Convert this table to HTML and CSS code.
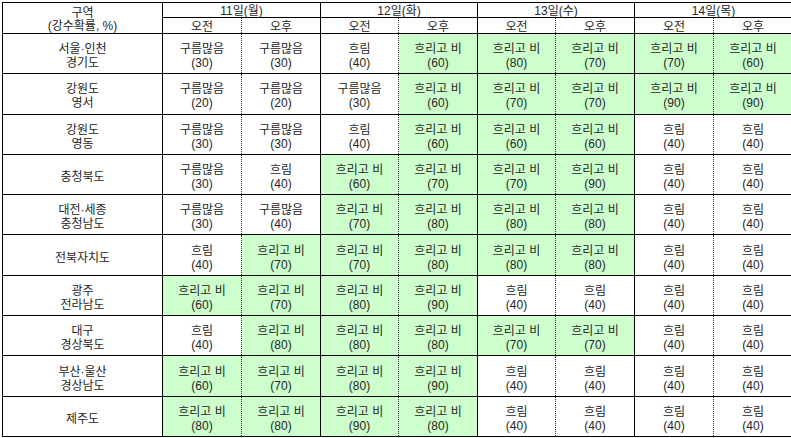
FILE: index.html
```html
<!DOCTYPE html>
<html lang="ko">
<head>
<meta charset="utf-8">
<link rel="stylesheet" href="styles.css">
</head>
<body>
<table class="fc">
  <colgroup>
    <col class="c-region">
    <col class="c79"><col class="c79"><col class="c78"><col class="c79"><col class="c78"><col class="c79"><col class="c79"><col class="c79">
  </colgroup>
  <thead>
    <tr class="h1">
      <th rowspan="2" class="region-head">구역<br>(강수확률, %)</th>
      <th colspan="2" class="day">11일(월)</th>
      <th colspan="2" class="day">12일(화)</th>
      <th colspan="2" class="day">13일(수)</th>
      <th colspan="2" class="day">14일(목)</th>
    </tr>
    <tr class="h2">
      <th class="am">오전</th><th class="pm">오후</th>
      <th class="am">오전</th><th class="pm">오후</th>
      <th class="am">오전</th><th class="pm">오후</th>
      <th class="am">오전</th><th class="pm">오후</th>
    </tr>
  </thead>
  <tbody>
    <tr>
      <th class="region">서울·인천<br>경기도</th>
      <td class="am">구름많음<br>(30)</td><td class="pm">구름많음<br>(30)</td>
      <td class="am">흐림<br>(40)</td><td class="pm rain">흐리고 비<br>(60)</td>
      <td class="am rain">흐리고 비<br>(80)</td><td class="pm rain">흐리고 비<br>(70)</td>
      <td class="am rain">흐리고 비<br>(70)</td><td class="pm rain">흐리고 비<br>(60)</td>
    </tr>
    <tr>
      <th class="region">강원도<br>영서</th>
      <td class="am">구름많음<br>(20)</td><td class="pm">구름많음<br>(20)</td>
      <td class="am">구름많음<br>(30)</td><td class="pm rain">흐리고 비<br>(60)</td>
      <td class="am rain">흐리고 비<br>(70)</td><td class="pm rain">흐리고 비<br>(70)</td>
      <td class="am rain">흐리고 비<br>(90)</td><td class="pm rain">흐리고 비<br>(90)</td>
    </tr>
    <tr>
      <th class="region">강원도<br>영동</th>
      <td class="am">구름많음<br>(30)</td><td class="pm">구름많음<br>(30)</td>
      <td class="am">흐림<br>(40)</td><td class="pm rain">흐리고 비<br>(60)</td>
      <td class="am rain">흐리고 비<br>(60)</td><td class="pm rain">흐리고 비<br>(60)</td>
      <td class="am">흐림<br>(40)</td><td class="pm">흐림<br>(40)</td>
    </tr>
    <tr>
      <th class="region">충청북도</th>
      <td class="am">구름많음<br>(30)</td><td class="pm">흐림<br>(40)</td>
      <td class="am rain">흐리고 비<br>(60)</td><td class="pm rain">흐리고 비<br>(70)</td>
      <td class="am rain">흐리고 비<br>(70)</td><td class="pm rain">흐리고 비<br>(90)</td>
      <td class="am">흐림<br>(40)</td><td class="pm">흐림<br>(40)</td>
    </tr>
    <tr>
      <th class="region">대전·세종<br>충청남도</th>
      <td class="am">구름많음<br>(30)</td><td class="pm">구름많음<br>(40)</td>
      <td class="am rain">흐리고 비<br>(70)</td><td class="pm rain">흐리고 비<br>(80)</td>
      <td class="am rain">흐리고 비<br>(80)</td><td class="pm rain">흐리고 비<br>(80)</td>
      <td class="am">흐림<br>(40)</td><td class="pm">흐림<br>(40)</td>
    </tr>
    <tr>
      <th class="region">전북자치도</th>
      <td class="am">흐림<br>(40)</td><td class="pm rain">흐리고 비<br>(70)</td>
      <td class="am rain">흐리고 비<br>(70)</td><td class="pm rain">흐리고 비<br>(80)</td>
      <td class="am rain">흐리고 비<br>(80)</td><td class="pm rain">흐리고 비<br>(80)</td>
      <td class="am">흐림<br>(40)</td><td class="pm">흐림<br>(40)</td>
    </tr>
    <tr>
      <th class="region">광주<br>전라남도</th>
      <td class="am rain">흐리고 비<br>(60)</td><td class="pm rain">흐리고 비<br>(70)</td>
      <td class="am rain">흐리고 비<br>(80)</td><td class="pm rain">흐리고 비<br>(90)</td>
      <td class="am">흐림<br>(40)</td><td class="pm">흐림<br>(40)</td>
      <td class="am">흐림<br>(40)</td><td class="pm">흐림<br>(40)</td>
    </tr>
    <tr>
      <th class="region">대구<br>경상북도</th>
      <td class="am">흐림<br>(40)</td><td class="pm rain">흐리고 비<br>(80)</td>
      <td class="am rain">흐리고 비<br>(80)</td><td class="pm rain">흐리고 비<br>(80)</td>
      <td class="am rain">흐리고 비<br>(70)</td><td class="pm rain">흐리고 비<br>(70)</td>
      <td class="am">흐림<br>(40)</td><td class="pm">흐림<br>(40)</td>
    </tr>
    <tr>
      <th class="region">부산·울산<br>경상남도</th>
      <td class="am rain">흐리고 비<br>(60)</td><td class="pm rain">흐리고 비<br>(70)</td>
      <td class="am rain">흐리고 비<br>(80)</td><td class="pm rain">흐리고 비<br>(90)</td>
      <td class="am">흐림<br>(40)</td><td class="pm">흐림<br>(40)</td>
      <td class="am">흐림<br>(40)</td><td class="pm">흐림<br>(40)</td>
    </tr>
    <tr>
      <th class="region">제주도</th>
      <td class="am rain">흐리고 비<br>(80)</td><td class="pm rain">흐리고 비<br>(80)</td>
      <td class="am rain">흐리고 비<br>(90)</td><td class="pm rain">흐리고 비<br>(80)</td>
      <td class="am">흐림<br>(40)</td><td class="pm">흐림<br>(40)</td>
      <td class="am">흐림<br>(40)</td><td class="pm">흐림<br>(40)</td>
    </tr>
  </tbody>
</table>
</body>
</html>
```

FILE: styles.css
```css
html, body {
  margin: 0;
  padding: 0;
  background: #ffffff;
  overflow: hidden;
}
body {
  padding: 2px 0 0 2px;
  width: 791px;
  height: 438px;
  box-sizing: border-box;
}
.fc {
  border-collapse: collapse;
  table-layout: fixed;
  width: 791px;
  font-family: "Liberation Sans", "Noto Sans CJK KR", sans-serif;
  font-size: 12px;
  line-height: 14px;
  color: #262626;
}
.c-region { width: 160px; }
.c79 { width: 79px; }
.c78 { width: 78px; }
.fc th, .fc td {
  padding: 0;
  text-align: center;
  font-weight: normal;
  border-top: 1.5px solid #000;
  border-bottom: 1.5px solid #000;
}
.fc .region-head {
  border-left: 1.5px solid #000;
  border-right: 1.5px solid #000;
  vertical-align: middle;
  padding-top: 4px;
  line-height: 13px;
}
.fc .day {
  height: 14px;
  vertical-align: bottom;
  border-right: 1.5px solid #000;
  line-height: 11px;
}
.h2 th {
  height: 15px;
  vertical-align: bottom;
  border-top: 1px solid #000;
  line-height: 11px;
}
.fc tbody tr {
  height: 40.3px;
}
.fc tbody td, .fc tbody th {
  vertical-align: middle;
  padding-top: 5px;
}
.fc .region {
  border-left: 1.5px solid #000;
  border-right: 1.5px solid #000;
}
.fc .am {
  border-right: 1px dotted #333;
}
.fc .pm {
  border-right: 1.5px solid #000;
}
.fc .rain {
  background: #ccffcc;
}
```
